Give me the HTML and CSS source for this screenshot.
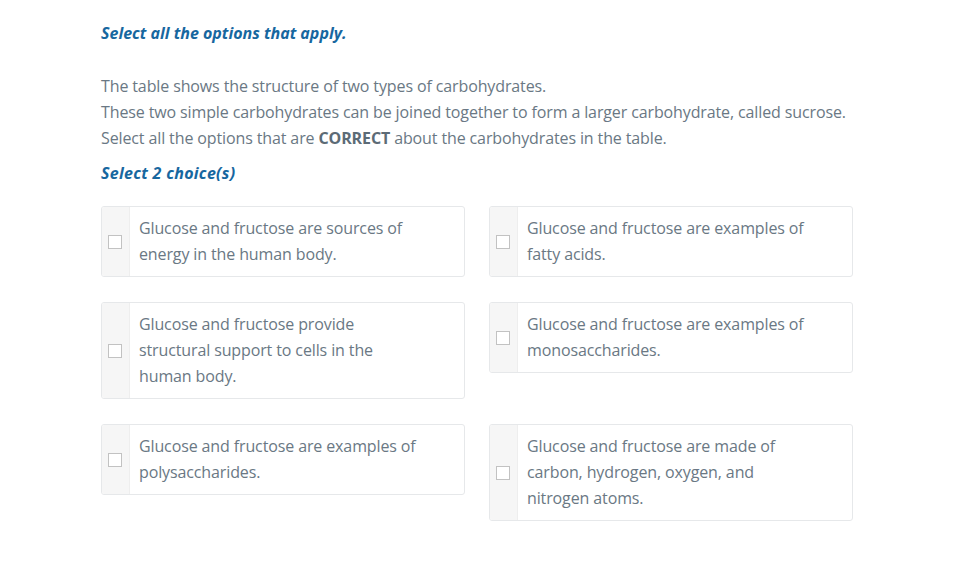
FILE: index.html
```html
<!DOCTYPE html>
<html>
<head>
<meta charset="utf-8">
<link rel="stylesheet" href="styles.css">
</head>
<body>
<div class="page">
  <div class="instruction">Select all the options that apply.</div>
  <div class="stem">
    <p>The table shows the structure of two types of carbohydrates.</p>
    <p>These two simple carbohydrates can be joined together to form a larger carbohydrate, called sucrose.</p>
    <p>Select all the options that are <b>CORRECT</b> about the carbohydrates in the table.</p>
  </div>
  <div class="count">Select 2 choice(s)</div>
  <div class="options">
    <div class="option"><div class="check"><span class="box"></span></div><div class="label">Glucose and fructose are sources of energy in the human body.</div></div>
    <div class="option"><div class="check"><span class="box"></span></div><div class="label">Glucose and fructose are examples of fatty acids.</div></div>
    <div class="option"><div class="check"><span class="box"></span></div><div class="label">Glucose and fructose provide structural support to cells in the human body.</div></div>
    <div class="option"><div class="check"><span class="box"></span></div><div class="label">Glucose and fructose are examples of monosaccharides.</div></div>
    <div class="option"><div class="check"><span class="box"></span></div><div class="label">Glucose and fructose are examples of polysaccharides.</div></div>
    <div class="option"><div class="check"><span class="box"></span></div><div class="label">Glucose and fructose are made of carbon, hydrogen, oxygen, and nitrogen atoms.</div></div>
  </div>
</div>
</body>
</html>
```
FILE: styles.css
```css
html, body { margin: 0; padding: 0; background: #fff; }
body { font-family: "Open Sans", "Noto Sans", sans-serif; color: #6a7884; font-size: 16px; letter-spacing: -0.12px; }
.page { width: 752px; padding: 21px 0 0 101px; }
.instruction { color: #17679f; font-weight: 700; font-style: italic; font-size: 16px; line-height: 24px; letter-spacing: 0; }
.stem { margin-top: 28px; }
.stem p { margin: 0; line-height: 26px; }
.stem b { color: #5c6b76; font-weight: 700; }
.count { color: #17679f; font-weight: 700; font-style: italic; line-height: 24px; margin-top: 10px; letter-spacing: 0.3px; }
.options { display: grid; grid-template-columns: 364px 364px; column-gap: 24px; row-gap: 25px; margin-top: 21px; align-items: start; }
.option { display: flex; border: 1px solid #e6e8ea; border-radius: 3px; overflow: hidden; }
.check { width: 27px; flex: none; background: #f6f6f6; border-right: 1px solid #eeeeee; display: flex; align-items: center; justify-content: center; }
.box { width: 12px; height: 12px; border: 1px solid #c2c2c2; background: #fff; display: block; margin-left: -2px; }
.label { width: 284px; padding: 8px 0 9px 9px; line-height: 26px; }
```
